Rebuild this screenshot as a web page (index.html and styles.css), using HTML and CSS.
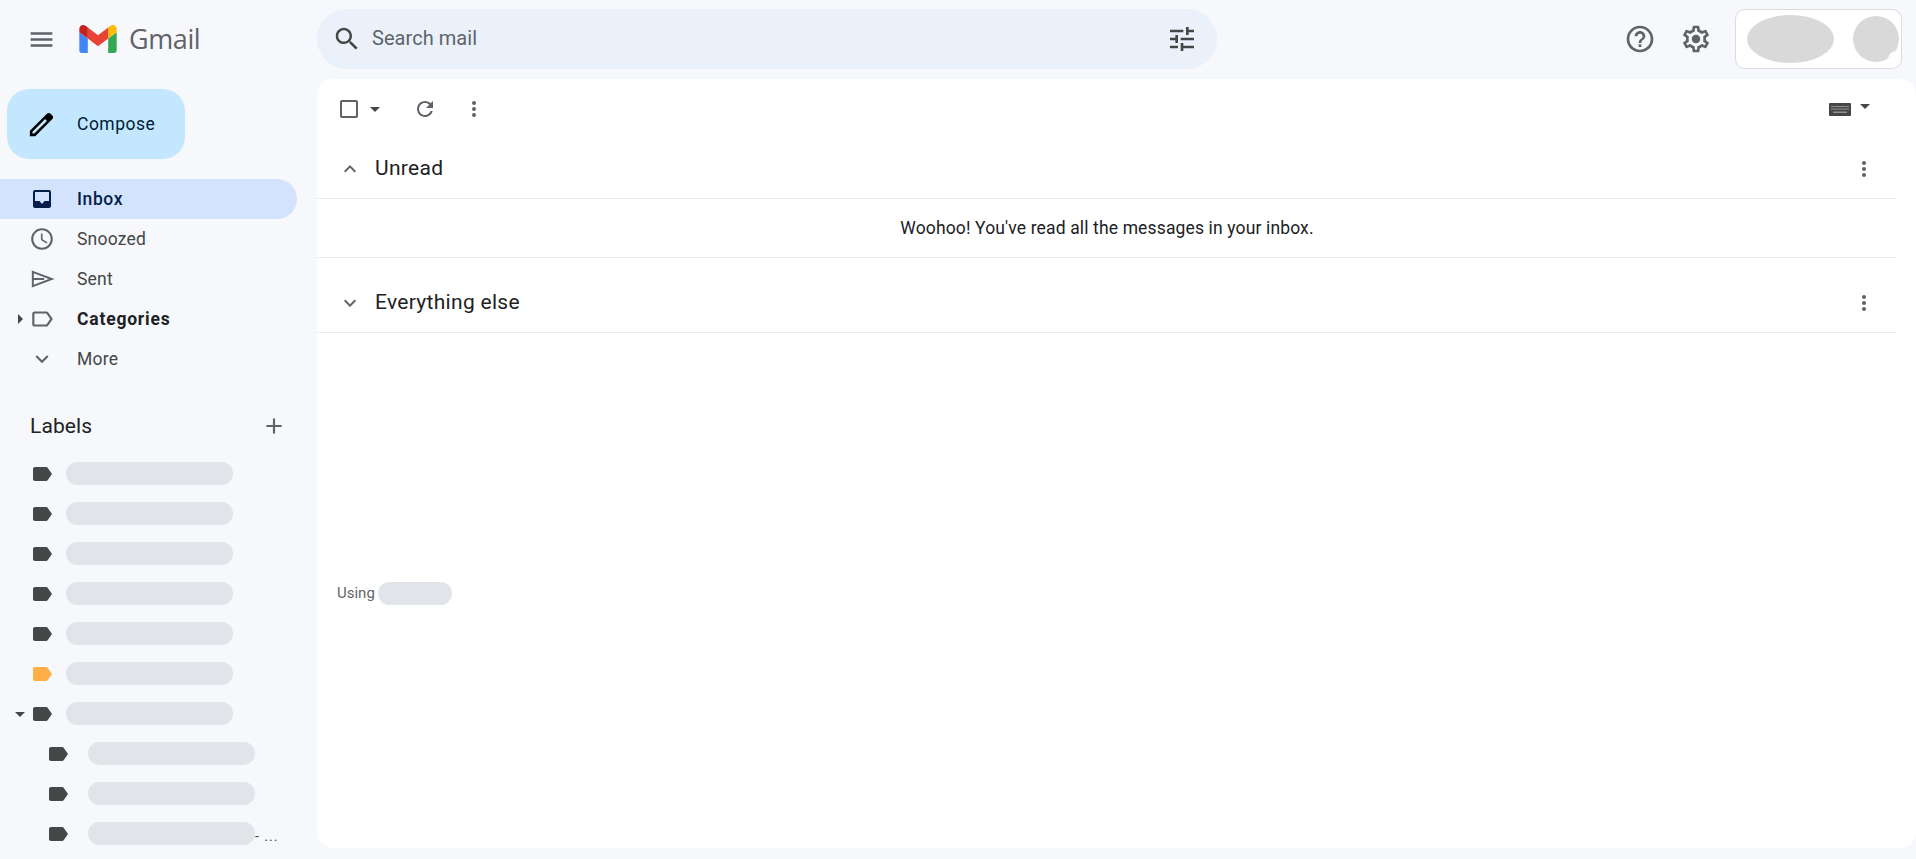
FILE: index.html
```html
<!DOCTYPE html>
<html lang="en">
<head>
<meta charset="utf-8">
<title>Gmail</title>
<link rel="stylesheet" href="styles.css">
</head>
<body>
<svg class="defs" width="0" height="0" aria-hidden="true">
  <symbol id="i-label" viewBox="0 0 24 24"><path d="M17.63 5.84C17.27 5.33 16.67 5 16 5L5 5.01C3.9 5.01 3 5.9 3 7v10c0 1.1.9 1.99 2 1.99L16 19c.67 0 1.27-.33 1.63-.84L22 12l-4.37-6.16z"/></symbol>
  <symbol id="i-kebab" viewBox="0 0 24 24"><circle cx="12" cy="6" r="2"/><circle cx="12" cy="12" r="2"/><circle cx="12" cy="18" r="2"/></symbol>
  <symbol id="i-caret" viewBox="0 0 10 5"><path d="M0 0h10L5 5z"/></symbol>
</svg>

<header class="topbar">
  <div class="brand">
    <svg class="icon menu" viewBox="0 0 24 24"><path d="M3 18h18v-2H3v2zm0-5h18v-2H3v2zm0-7v2h18V6H3z"/></svg>
    <svg class="logo" viewBox="52 42 88 66"><path fill="#4285f4" d="M58 108h14V74L52 59v43c0 3.32 2.69 6 6 6"/><path fill="#34a853" d="M120 108h14c3.32 0 6-2.69 6-6V59l-20 15"/><path fill="#fbbc04" d="M120 48v26l20-15v-8c0-7.42-8.47-11.65-14.4-7.2"/><path fill="#ea4335" d="M72 74V48l24 18 24-18v26L96 92"/><path fill="#c5221f" d="M52 51v8l20 15V48l-5.6-4.2c-5.94-4.45-14.4-.22-14.4 7.2"/></svg>
    <span class="wordmark">Gmail</span>
  </div>
  <div class="search">
    <svg class="icon search-icon" viewBox="0 0 24 24"><path d="M15.5 14h-.79l-.28-.27C15.41 12.59 16 11.11 16 9.5 16 5.91 13.09 3 9.5 3S3 5.91 3 9.5 5.91 16 9.5 16c1.61 0 3.09-.59 4.23-1.57l.27.28v.79l5 4.99L20.49 19l-4.99-5zm-6 0C7.01 14 5 11.99 5 9.5S7.01 5 9.5 5 14 7.01 14 9.5 11.99 14 9.5 14z"/></svg>
    <span class="search-text">Search mail</span>
    <svg class="icon tune" viewBox="0 0 24 24"><path d="M3 17v2h6v-2H3zM3 5v2h10V5H3zm10 16v-2h8v-2h-8v-2h-2v6h2zM7 9v2H3v2h4v2h2V9H7zm14 4v-2H11v2h10zm-6-4h2V7h4V5h-4V3h-2v6z"/></svg>
  </div>
  <div class="top-actions">
    <svg class="icon top-icon help" viewBox="0 0 24 24"><path d="M11 18h2v-2h-2v2zm1-16C6.48 2 2 6.48 2 12s4.48 10 10 10 10-4.48 10-10S17.52 2 12 2zm0 18c-4.41 0-8-3.59-8-8s3.59-8 8-8 8 3.59 8 8-3.59 8-8 8zm0-14c-2.21 0-4 1.79-4 4h2c0-1.1.9-2 2-2s2 .9 2 2c0 2-3 1.75-3 5h2c0-2.25 3-2.5 3-5 0-2.21-1.79-4-4-4z"/></svg>
    <svg class="icon top-icon gear" viewBox="0 0 24 24"><path d="M19.43 12.98c.04-.32.07-.64.07-.98 0-.34-.03-.66-.07-.98l2.11-1.65c.19-.15.24-.42.12-.64l-2-3.46c-.09-.16-.26-.25-.44-.25-.06 0-.12.01-.17.03l-2.49 1c-.52-.4-1.08-.73-1.69-.98l-.38-2.65C14.46 2.18 14.25 2 14 2h-4c-.25 0-.46.18-.49.42l-.38 2.65c-.61.25-1.17.59-1.69.98l-2.49-1c-.06-.02-.12-.03-.18-.03-.17 0-.34.09-.43.25l-2 3.46c-.13.22-.07.49.12.64l2.11 1.65c-.04.32-.07.65-.07.98 0 .33.03.66.07.98l-2.11 1.65c-.19.15-.24.42-.12.64l2 3.46c.09.16.26.25.44.25.06 0 .12-.01.17-.03l2.49-1c.52.4 1.08.73 1.69.98l.38 2.65c.03.24.24.42.49.42h4c.25 0 .46-.18.49-.42l.38-2.65c.61-.25 1.17-.59 1.69-.98l2.49 1c.06.02.12.03.18.03.17 0 .34-.09.43-.25l2-3.46c.12-.22.07-.49-.12-.64l-2.11-1.65zm-1.98-1.71c.04.31.05.52.05.73 0 .21-.02.43-.05.73l-.14 1.13.89.7 1.08.84-.7 1.21-1.27-.51-1.04-.42-.9.68c-.43.32-.84.56-1.25.73l-1.06.43-.16 1.13-.2 1.35h-1.4l-.19-1.35-.16-1.13-1.06-.43c-.43-.18-.83-.41-1.23-.71l-.91-.7-1.06.43-1.27.51-.7-1.21 1.08-.84.89-.7-.14-1.13c-.03-.31-.05-.54-.05-.74s.02-.43.05-.73l.14-1.13-.89-.7-1.08-.84.7-1.21 1.27.51 1.04.42.9-.68c.43-.32.84-.56 1.25-.73l1.06-.43.16-1.13.2-1.35h1.39l.19 1.35.16 1.13 1.06.43c.43.18.83.41 1.23.71l.91.7 1.06-.43 1.27-.51.7 1.21-1.07.85-.89.7.14 1.13zM12 8.800c-1.770 0-3.200 1.430-3.200 3.200s1.430 3.200 3.200 3.200 3.200-1.430 3.200-3.200-1.430-3.200-3.200-3.200z"/></svg>
    <div class="account">
      <span class="account-name"></span>
      <span class="avatar"></span>
    </div>
  </div>
</header>

<div class="workspace">
  <nav class="sidebar">
    <button class="compose">
      <svg class="compose-icon" viewBox="0 0 24 24"><path d="M20.41 4.94l-1.35-1.35c-.78-.78-2.05-.78-2.83 0L3 16.82V21h4.18L20.41 7.77c.79-.78.79-2.05 0-2.83zm-14 14.12L5 19v-1.36l9.82-9.82 1.41 1.41-9.82 9.83z"/></svg>
      <span>Compose</span>
    </button>
    <ul class="nav">
      <li class="nav-row active">
        <span class="arrow-slot"></span>
        <svg class="icon" viewBox="0 0 24 24"><path fill-rule="evenodd" d="M19 3H5a2 2 0 0 0-2 2v14a2 2 0 0 0 2 2h14a2 2 0 0 0 2-2V5a2 2 0 0 0-2-2zm0 11h-4.500L12 17l-2.500-3H5V5h14z"/></svg>
        <span>Inbox</span>
      </li>
      <li class="nav-row">
        <span class="arrow-slot"></span>
        <svg class="icon" viewBox="0 0 24 24"><path d="M11.99 2C6.47 2 2 6.48 2 12s4.470 10 9.990 10C17.520 22 22 17.520 22 12S17.520 2 11.990 2zM12 20c-4.420 0-8-3.580-8-8s3.580-8 8-8 8 3.580 8 8-3.580 8-8 8zm.5-13H11v6l5.250 3.150.75-1.230-4.500-2.670z"/></svg>
        <span>Snoozed</span>
      </li>
      <li class="nav-row">
        <span class="arrow-slot"></span>
        <svg class="icon sent" viewBox="0 0 24 24"><path d="M3.500 5.500L21 12 3.500 18.500zM3.500 12H14"/></svg>
        <span>Sent</span>
      </li>
      <li class="nav-row bold">
        <span class="arrow-slot"><svg class="caret-side" viewBox="0 0 5 10"><path d="M0 0l5 5-5 5z"/></svg></span>
        <svg class="icon" viewBox="0 0 24 24"><path d="M17.630 5.840C17.270 5.330 16.670 5 16 5L5 5.010C3.900 5.010 3 5.900 3 7v10c0 1.100.9 1.990 2 1.990L16 19c.67 0 1.270-.33 1.630-.84L22 12l-4.370-6.160zM16 17H5V7h11l3.550 5L16 17z"/></svg>
        <span>Categories</span>
      </li>
      <li class="nav-row">
        <span class="arrow-slot"></span>
        <svg class="icon" viewBox="0 0 24 24"><path d="M7.410 8.590L12 13.170l4.590-4.580L18 10l-6 6-6-6z"/></svg>
        <span>More</span>
      </li>
    </ul>

    <div class="labels-head">
      <span>Labels</span>
      <svg class="icon plus" viewBox="0 0 24 24"><path d="M19 13h-6v6h-2v-6H5v-2h6V5h2v6h6v2z"/></svg>
    </div>
    <ul class="labels">
      <li class="label-row"><span class="arrow-slot"></span><svg class="icon"><use href="#i-label"/></svg><span class="pill"></span></li>
      <li class="label-row"><span class="arrow-slot"></span><svg class="icon"><use href="#i-label"/></svg><span class="pill"></span></li>
      <li class="label-row"><span class="arrow-slot"></span><svg class="icon"><use href="#i-label"/></svg><span class="pill"></span></li>
      <li class="label-row"><span class="arrow-slot"></span><svg class="icon"><use href="#i-label"/></svg><span class="pill"></span></li>
      <li class="label-row"><span class="arrow-slot"></span><svg class="icon"><use href="#i-label"/></svg><span class="pill"></span></li>
      <li class="label-row orange"><span class="arrow-slot"></span><svg class="icon"><use href="#i-label"/></svg><span class="pill"></span></li>
      <li class="label-row"><span class="arrow-slot"><svg class="caret-down"><use href="#i-caret"/></svg></span><svg class="icon"><use href="#i-label"/></svg><span class="pill"></span></li>
      <li class="label-row sub"><svg class="icon"><use href="#i-label"/></svg><span class="pill"></span></li>
      <li class="label-row sub"><svg class="icon"><use href="#i-label"/></svg><span class="pill"></span></li>
      <li class="label-row sub"><svg class="icon"><use href="#i-label"/></svg><span class="pill"></span><span class="trail">- ...</span></li>
    </ul>
  </nav>

  <main class="panel">
    <div class="toolbar">
      <div class="toolbar-left">
        <svg class="icon checkbox" viewBox="0 0 24 24"><path d="M19 5v14H5V5h14m0-2H5c-1.100 0-2 .9-2 2v14c0 1.100.9 2 2 2h14c1.100 0 2-.9 2-2V5c0-1.100-.9-2-2-2z"/></svg>
        <svg class="caret"><use href="#i-caret"/></svg>
        <svg class="icon refresh" viewBox="0 0 24 24"><path d="M17.650 6.350C16.200 4.900 14.210 4 12 4c-4.420 0-7.990 3.580-7.990 8s3.570 8 7.990 8c3.730 0 6.840-2.550 7.730-6h-2.080c-.82 2.330-3.040 4-5.650 4-3.310 0-6-2.690-6-6s2.690-6 6-6c1.660 0 3.140.69 4.220 1.780L13 11h7V4l-2.350 2.350z"/></svg>
        <svg class="icon kebab"><use href="#i-kebab"/></svg>
      </div>
      <div class="toolbar-right">
        <svg class="keyboard" viewBox="0 0 22 13">
          <rect class="kb-body" width="22" height="13" rx="1"/>
          <path class="kb-keys" d="M2 3h18v1H2zM2 5.500h18v1H2zM4 8.500h14v1.500H4z"/>
        </svg>
        <svg class="caret kb-caret"><use href="#i-caret"/></svg>
      </div>
    </div>

    <section class="section-head">
      <svg class="icon chev" viewBox="0 0 24 24"><path d="M7.410 15.410L12 10.830l4.590 4.580L18 14l-6-6-6 6z"/></svg>
      <h2>Unread</h2>
      <svg class="icon kebab"><use href="#i-kebab"/></svg>
    </section>
    <p class="empty">Woohoo! You've read all the messages in your inbox.</p>
    <section class="section-head else">
      <svg class="icon chev" viewBox="0 0 24 24"><path d="M7.410 8.590L12 13.170l4.590-4.580L18 10l-6 6-6-6z"/></svg>
      <h2>Everything else</h2>
      <svg class="icon kebab"><use href="#i-kebab"/></svg>
    </section>
    <div class="usage"><span class="usage-text">Using</span><span class="usage-pill"></span></div>
  </main>
</div>
</body>
</html>
```

FILE: styles.css
```css
* { box-sizing: border-box; }
html, body { height: 100%; }
body {
  margin: 0;
  display: flex;
  flex-direction: column;
  overflow: hidden;
  background: #f6f8fc;
  color: #202124;
  font-family: Roboto, "Noto Sans", Arial, sans-serif;
}
.defs { display: block; flex: none; }
ul { list-style: none; margin: 0; padding: 0; }
.icon { width: 24px; height: 24px; flex: none; fill: #444746; }

.topbar { flex: none; height: 79px; padding-top: 9px; display: flex; }
.brand { width: 317px; height: 60px; flex: none; display: flex; align-items: center; padding-left: 27px; }
.menu { width: 29px; height: 29px; fill: #5f6368; }
.logo { width: 38px; height: 28px; margin-left: 23px; margin-top: -1px; }
.wordmark { margin-left: 12px; margin-top: -2px; font-size: 27px; color: #5f6368; font-family: "Open Sans", Roboto, sans-serif; letter-spacing: -.4px; }
.search { width: 900px; height: 60px; flex: none; display: flex; align-items: center; padding: 0 19px 0 15px; border-radius: 30px; background: #eaf1fb; }
.search-icon { width: 30px; height: 30px; }
.search-text { margin: -2px 0 0 10px; flex: 1; font-size: 20px; letter-spacing: .05px; color: #5f6368; }
.tune { width: 32px; height: 32px; }
.top-actions { flex: 1; height: 60px; display: flex; align-items: center; justify-content: flex-end; padding-right: 14px; }
.top-icon { width: 32px; height: 32px; fill: #5f6368; }
.help { margin-right: 24px; }
.gear { margin-right: 23px; }
.account { width: 167px; height: 60px; display: flex; align-items: center; justify-content: space-between; padding: 0 2px 0 11px; background: #fff; border: 1px solid #dadce0; border-radius: 10px; }
.account-name { width: 87px; height: 48px; border-radius: 50%; background: #d9d9d9; }
.avatar { position: relative; overflow: hidden; width: 46px; height: 46px; border-radius: 50%; background: #d9d9d9; }
.avatar::after { content: ""; position: absolute; right: -6px; bottom: -6px; width: 17px; height: 17px; border-radius: 50%; background: #fff; }

.workspace { flex: 1; min-height: 0; display: flex; padding-bottom: 11px; }
.sidebar { width: 317px; flex: none; padding-top: 10px; }
.compose { width: 178px; height: 70px; margin-left: 7px; display: flex; align-items: center; padding: 0 0 0 19px; gap: 20px; border: 0; border-radius: 22px; background: #c2e7ff; color: #001d35; font: 400 17.500px Roboto, sans-serif; letter-spacing: .5px; }
.compose-icon { width: 31px; height: 31px; fill: #000; flex: none; }
.nav { margin-top: 20px; }
.nav-row { width: 297px; height: 40px; display: flex; align-items: center; padding-left: 14px; border-radius: 0 20px 20px 0; font-size: 17.500px; letter-spacing: .2px; color: #444746; }
.nav-row .icon { width: 26px; height: 26px; margin: 0 22px 0 -1px; fill: #5f6368; }
.arrow-slot { width: 12px; margin-right: 4px; flex: none; display: flex; justify-content: center; align-items: center; }
.active { background: #d3e3fd; color: #041e49; font-weight: 500; letter-spacing: .6px; }
.nav-row.active .icon { fill: #041e49; width: 24px; height: 24px; margin: 0 23px 0 0; }
.bold { font-weight: 700; color: #202124; letter-spacing: .8px; }
.nav-row .sent { fill: none; stroke: #5f6368; stroke-width: 1.800; }
.caret-side { width: 5px; height: 10px; fill: #444746; }
.caret-down { width: 10px; height: 5px; fill: #444746; }
.labels-head { width: 297px; height: 40px; margin-top: 27px; display: flex; align-items: center; justify-content: space-between; padding-left: 30px; font-size: 21px; letter-spacing: .1px; }
.plus { width: 26px; height: 26px; margin-right: 10px; fill: #5f6368; }
.labels { margin-top: 8px; }
.label-row { height: 40px; display: flex; align-items: center; padding-left: 14px; }
.label-row .pill { margin-left: 12px; }
.pill { width: 167px; height: 23px; flex: none; border-radius: 12px; background: #e1e4e8; margin-top: -2px; }
.orange .icon { fill: #ffad46; }
.sub { padding-left: 46px; }
.sub .pill { margin-left: 18px; }
.trail { margin-top: 4px; font-size: 14px; letter-spacing: 1px; color: #444746; white-space: pre; }

.panel { flex: 1; min-width: 0; padding-right: 19px; background: #fff; border-radius: 16px; }
.toolbar { height: 60px; display: flex; align-items: center; justify-content: space-between; padding: 0 27px 0 20px; }
.toolbar-left, .toolbar-right { display: flex; align-items: center; }
.checkbox { margin-right: 9px; fill: #5f6368; }
.caret { width: 10px; height: 5px; fill: #444746; flex: none; }
.refresh { margin-left: 33px; fill: #5f6368; }
.kebab { fill: #5f6368; }
.toolbar .kebab { margin-left: 25px; }
.keyboard { width: 22px; height: 13px; margin-right: 1px; }
.kb-body { fill: #444746; }
.kb-keys { fill: #8e9091; }
.kb-caret { margin-left: 8px; margin-top: -6px; }
.section-head { height: 60px; display: flex; align-items: center; padding: 0 21px; border-bottom: 1px solid #e8eaed; }
.section-head h2 { flex: 1; margin: -2px 0 0 13px; font-size: 21px; letter-spacing: .3px; font-weight: 400; color: #202124; }
.chev { fill: #5f6368; }
.empty { height: 59px; margin: 0; display: flex; align-items: center; justify-content: center; border-bottom: 1px solid #e8eaed; font-size: 17.500px; letter-spacing: .14px; color: #202124; }
.else { margin-top: 15px; }
.usage { margin-top: 249px; padding-left: 20px; display: flex; align-items: center; font-size: 15px; color: #5f6368; }
.usage-text { margin-top: -2px; }
.usage-pill { width: 74px; height: 23px; margin-left: 3px; border-radius: 12px; background: #e1e4e8; }
```
